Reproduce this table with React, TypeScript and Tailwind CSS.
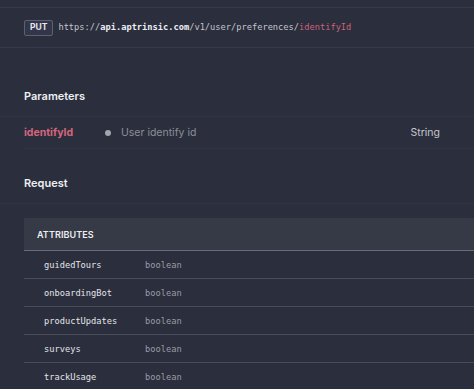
const attributes = [
  { name: 'guidedTours', type: 'boolean' },
  { name: 'onboardingBot', type: 'boolean' },
  { name: 'productUpdates', type: 'boolean' },
  { name: 'surveys', type: 'boolean' },
  { name: 'trackUsage', type: 'boolean' },
]

const mono = "font-['DejaVu_Sans_Mono',monospace]"

export default function App() {
  return (
    <div className="min-h-screen overflow-hidden bg-[#2b2e3c] font-['Inter',sans-serif] pt-[7px]">
      {/* Endpoint */}
      <div className="flex h-[41px] items-center gap-[5px] border-y border-[#363947] px-6">
        <span className="flex h-[16px] items-center rounded-[2px] border border-[#5d606d] bg-[#33364a] px-[5px] text-[8.5px] font-bold text-[#e6e7eb]">
          PUT
        </span>
        <span className={`${mono} text-[8.7px] text-[#c3c5cc]`}>
          https://<span className="font-bold text-[#eceef2]">api.aptrinsic.com</span>/v1/user/preferences/
          <span className="text-[#c9637a]">identifyId</span>
        </span>
      </div>

      {/* Parameters */}
      <h2 className="mt-[40px] h-4 px-6 text-[11px] font-semibold leading-4 text-[#eef0f4]">Parameters</h2>
      <div className="mt-3 border-t border-[#323544]">
        <div className="ml-6 flex h-[32px] items-center border-b border-[#323544] pt-[1px]">
          <span className="w-[81px] text-[10.5px] font-bold text-[#d4667c]">identifyId</span>
          <span className="h-[6px] w-[6px] rounded-full bg-[#a3a5ae]" />
          <span className="ml-[10px] flex-1 text-[10.5px] text-[#8b8e99]">User identify id</span>
          <span className="mr-[34px] text-[10.5px] text-[#c5c7ce]">String</span>
        </div>
      </div>

      {/* Request */}
      <h2 className="mt-[26px] h-4 px-6 text-[11px] font-semibold leading-4 text-[#eef0f4]">Request</h2>
      <div className="mt-3 border-t border-[#323544]" />

      <div className="ml-6 mt-[14px]">
        <div className="flex h-[33px] items-center border-b border-[#6a6d79] bg-[#363946] px-[13px] pt-[2px]">
          <span className="text-[9px] font-semibold tracking-[0.1px] text-[#eceef2]">ATTRIBUTES</span>
        </div>
        {attributes.map((attr) => (
          <div key={attr.name} className="flex h-[28px] items-center border-b border-[#484b58] px-5 pt-[2px]">
            <span className={`${mono} w-[101px] text-[8.7px] text-[#e3e4e9]`}>{attr.name}</span>
            <span className={`${mono} text-[8.7px] text-[#9a9ca6]`}>{attr.type}</span>
          </div>
        ))}
      </div>
    </div>
  )
}
